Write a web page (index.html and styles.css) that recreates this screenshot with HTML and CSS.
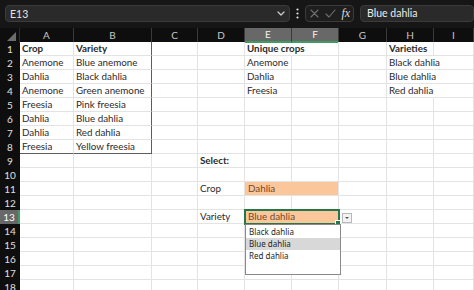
FILE: index.html
```html
<!DOCTYPE html>
<html lang="en">
<head>
<meta charset="utf-8">
<title>Sheet</title>
<link rel="stylesheet" href="styles.css">
</head>
<body>
<div class="app">
  <div class="topbar">
    <div class="namebox">
      <span>E13</span>
      <svg class="chev" width="8" height="5" viewBox="0 0 8 5"><path d="M1 1 L4 4 L7 1" fill="none" stroke="#cfcfcf" stroke-width="1.2" stroke-linecap="round" stroke-linejoin="round"/></svg>
    </div>
    <div class="dots">
      <svg width="3" height="11" viewBox="0 0 3 11"><circle cx="1.5" cy="1.5" r="1.1" fill="#e0e0e0"/><circle cx="1.5" cy="5.5" r="1.1" fill="#e0e0e0"/><circle cx="1.5" cy="9.5" r="1.1" fill="#e0e0e0"/></svg>
    </div>
    <div class="fxbox">
      <svg width="9" height="9" viewBox="0 0 9 9"><path d="M1 1 L8 8 M8 1 L1 8" stroke="#707070" stroke-width="1.1" stroke-linecap="round"/></svg>
      <svg width="11" height="9" viewBox="0 0 11 9"><path d="M1 5 L4 8 L10 1" fill="none" stroke="#707070" stroke-width="1.1" stroke-linecap="round" stroke-linejoin="round"/></svg>
      <span class="fx">fx</span>
    </div>
    <div class="formula">Blue dahlia</div>
  </div>

  <div class="sheet">
    <div class="row hdr">
      <div class="corner"><span class="tri"></span></div>
      <div class="ch">A</div><div class="ch">B</div><div class="ch">C</div><div class="ch">D</div>
      <div class="ch sel">E</div><div class="ch sel">F</div><div class="ch">G</div><div class="ch">H</div><div class="ch">I</div>
    </div>

    <div class="row">
      <div class="rh">1</div>
      <div class="c b">Crop</div><div class="c b tr">Variety</div><div class="c"></div><div class="c"></div>
      <div class="c b spill">Unique crops</div><div class="c"></div><div class="c"></div><div class="c b">Varieties</div><div class="c"></div>
    </div>
    <div class="row">
      <div class="rh">2</div>
      <div class="c">Anemone</div><div class="c tr">Blue anemone</div><div class="c"></div><div class="c"></div>
      <div class="c">Anemone</div><div class="c"></div><div class="c"></div><div class="c spill">Black dahlia</div><div class="c"></div>
    </div>
    <div class="row">
      <div class="rh">3</div>
      <div class="c">Dahlia</div><div class="c tr">Black dahlia</div><div class="c"></div><div class="c"></div>
      <div class="c">Dahlia</div><div class="c"></div><div class="c"></div><div class="c spill">Blue dahlia</div><div class="c"></div>
    </div>
    <div class="row">
      <div class="rh">4</div>
      <div class="c">Anemone</div><div class="c tr">Green anemone</div><div class="c"></div><div class="c"></div>
      <div class="c">Freesia</div><div class="c"></div><div class="c"></div><div class="c spill">Red dahlia</div><div class="c"></div>
    </div>
    <div class="row">
      <div class="rh">5</div>
      <div class="c">Freesia</div><div class="c tr">Pink freesia</div><div class="c"></div><div class="c"></div>
      <div class="c"></div><div class="c"></div><div class="c"></div><div class="c"></div><div class="c"></div>
    </div>
    <div class="row">
      <div class="rh">6</div>
      <div class="c">Dahlia</div><div class="c tr">Blue dahlia</div><div class="c"></div><div class="c"></div>
      <div class="c"></div><div class="c"></div><div class="c"></div><div class="c"></div><div class="c"></div>
    </div>
    <div class="row">
      <div class="rh">7</div>
      <div class="c">Dahlia</div><div class="c tr">Red dahlia</div><div class="c"></div><div class="c"></div>
      <div class="c"></div><div class="c"></div><div class="c"></div><div class="c"></div><div class="c"></div>
    </div>
    <div class="row">
      <div class="rh">8</div>
      <div class="c tb">Freesia</div><div class="c tr tb">Yellow freesia</div><div class="c"></div><div class="c"></div>
      <div class="c"></div><div class="c"></div><div class="c"></div><div class="c"></div><div class="c"></div>
    </div>
    <div class="row">
      <div class="rh">9</div>
      <div class="c"></div><div class="c"></div><div class="c"></div><div class="c b">Select:</div>
      <div class="c"></div><div class="c"></div><div class="c"></div><div class="c"></div><div class="c"></div>
    </div>
    <div class="row">
      <div class="rh">10</div>
      <div class="c"></div><div class="c"></div><div class="c"></div><div class="c"></div>
      <div class="c"></div><div class="c"></div><div class="c"></div><div class="c"></div><div class="c"></div>
    </div>
    <div class="row">
      <div class="rh">11</div>
      <div class="c"></div><div class="c"></div><div class="c"></div><div class="c">Crop</div>
      <div class="c merged fill">Dahlia</div><div class="c"></div><div class="c"></div><div class="c"></div>
    </div>
    <div class="row">
      <div class="rh">12</div>
      <div class="c"></div><div class="c"></div><div class="c"></div><div class="c"></div>
      <div class="c"></div><div class="c"></div><div class="c"></div><div class="c"></div><div class="c"></div>
    </div>
    <div class="row">
      <div class="rh sel">13</div>
      <div class="c"></div><div class="c"></div><div class="c"></div><div class="c">Variety</div>
      <div class="c merged fill active">Blue dahlia<span class="handle"></span></div><div class="c"></div><div class="c"></div><div class="c"></div>
    </div>
    <div class="row">
      <div class="rh">14</div>
      <div class="c"></div><div class="c"></div><div class="c"></div><div class="c"></div>
      <div class="c"></div><div class="c"></div><div class="c"></div><div class="c"></div><div class="c"></div>
    </div>
    <div class="row">
      <div class="rh">15</div>
      <div class="c"></div><div class="c"></div><div class="c"></div><div class="c"></div>
      <div class="c"></div><div class="c"></div><div class="c"></div><div class="c"></div><div class="c"></div>
    </div>
    <div class="row">
      <div class="rh">16</div>
      <div class="c"></div><div class="c"></div><div class="c"></div><div class="c"></div>
      <div class="c"></div><div class="c"></div><div class="c"></div><div class="c"></div><div class="c"></div>
    </div>
    <div class="row">
      <div class="rh">17</div>
      <div class="c"></div><div class="c"></div><div class="c"></div><div class="c"></div>
      <div class="c"></div><div class="c"></div><div class="c"></div><div class="c"></div><div class="c"></div>
    </div>
    <div class="row">
      <div class="rh">18</div>
      <div class="c"></div><div class="c"></div><div class="c"></div><div class="c"></div>
      <div class="c"></div><div class="c"></div><div class="c"></div><div class="c"></div><div class="c"></div>
    </div>
  </div>

  <div class="dd-btn"><span class="dd-arrow"></span></div>
  <div class="dd-list">
    <div class="dd-item">Black dahlia</div>
    <div class="dd-item hi">Blue dahlia</div>
    <div class="dd-item">Red dahlia</div>
  </div>
</div>
</body>
</html>
```

FILE: styles.css
```css
* { box-sizing: border-box; }
html, body { margin: 0; padding: 0; }
body {
  width: 474px;
  height: 290px;
  overflow: hidden;
  background: #ffffff;
  font-family: Lato, "Liberation Sans", sans-serif;
}
.app {
  position: relative;
  width: 474px;
  height: 290px;
  overflow: hidden;
}

/* formula bar */
.topbar {
  height: 28px;
  background: #161616;
  display: flex;
  align-items: flex-start;
  padding: 5px 0 0 5px;
}
.namebox {
  width: 301px;
  height: 17px;
  background: #2a2a2a;
  border: 1px solid #3b3b3b;
  border-radius: 4px;
  display: flex;
  align-items: center;
  justify-content: space-between;
  padding: 0 4px 0 4px;
  color: #e4e4e4;
  font-size: 10.5px;
}
.dots {
  width: 16px;
  height: 17px;
  display: flex;
  align-items: center;
  justify-content: center;
}
.fxbox {
  width: 51px;
  height: 17px;
  border: 1px solid #3b3b3b;
  border-radius: 4px;
  background: #1e1e1e;
  display: flex;
  align-items: center;
  padding: 0 0 0 4px;
  gap: 6px;
}
.fx {
  font-family: "Liberation Serif", serif;
  font-style: italic;
  font-size: 12px;
  color: #dcdcdc;
  margin-left: -1px;
}
.formula {
  width: 120px;
  margin-left: 6px;
  height: 17px;
  background: #2a2a2a;
  border: 1px solid #3b3b3b;
  border-radius: 4px;
  color: #ececec;
  font-size: 10.5px;
  line-height: 15px;
  padding-left: 6px;
}

/* grid */
.row {
  display: grid;
  grid-template-columns: 20px 54px 78px 46px 47px 47px 47px 48px 47px 40px;
  height: 14px;
}
.hdr { background: #0e0e0e; }
.corner {
  position: relative;
  border-right: 1px solid #2c2c2c;
}
.tri {
  position: absolute;
  right: 3px;
  bottom: 2px;
  width: 0;
  height: 0;
  border-left: 9px solid transparent;
  border-bottom: 9px solid #6c6c6c;
}
.ch {
  color: #c8c8c8;
  font-size: 10px;
  text-align: center;
  line-height: 14px;
  border-right: 1px solid #3a3a3a;
}
.ch.sel {
  background: #686868;
  color: #f2f2f2;
  border-bottom: 2px solid #3f9a64;
  line-height: 13px;
}
.rh {
  background: #0e0e0e;
  color: #e0e0e0;
  font-size: 10px;
  text-align: center;
  line-height: 14px;
}
.rh.sel {
  background: #686868;
  color: #ffffff;
  border-right: 2px solid #3f9a64;
}
.c {
  position: relative;
  border-right: 1px solid #e3e3e3;
  border-bottom: 1px solid #e3e3e3;
  font-size: 9.8px;
  line-height: 13px;
  padding-left: 2px;
  white-space: nowrap;
  color: #2b2b2b;
}
.b { font-weight: 700; }
.spill { border-right-color: transparent; }
.tr { border-right-color: #5c5c5c; }
.tb { border-bottom-color: #5c5c5c; }
.merged { grid-column: span 2; }
.fill {
  background: #fbc79a;
  color: #6f4a2c;
  padding-left: 3px;
}
.active {
  outline: 2px solid #23774a;
  outline-offset: -1px;
  z-index: 2;
}
.handle {
  position: absolute;
  right: -3px;
  bottom: -3px;
  width: 4px;
  height: 4px;
  background: #23774a;
  border: 1px solid #ffffff;
  box-sizing: content-box;
}

/* data validation dropdown */
.dd-btn {
  position: absolute;
  left: 342px;
  top: 213px;
  width: 10px;
  height: 10px;
  background: #f3f3f3;
  border: 1px solid #b8b8b8;
  display: flex;
  align-items: center;
  justify-content: center;
}
.dd-arrow {
  width: 0;
  height: 0;
  border-left: 2px solid transparent;
  border-right: 2px solid transparent;
  border-top: 2px solid #555555;
}
.dd-list {
  position: absolute;
  left: 245px;
  top: 224px;
  width: 96px;
  height: 51px;
  background: #ffffff;
  border: 1px solid #8a8a8a;
  padding-top: 1px;
  z-index: 3;
}
.dd-item {
  height: 12px;
  line-height: 12px;
  font-family: "Noto Sans", "Liberation Sans", sans-serif;
  font-size: 8px;
  color: #1e1e1e;
  padding-left: 3px;
}
.dd-item.hi { background: #d8d8d8; }
```
